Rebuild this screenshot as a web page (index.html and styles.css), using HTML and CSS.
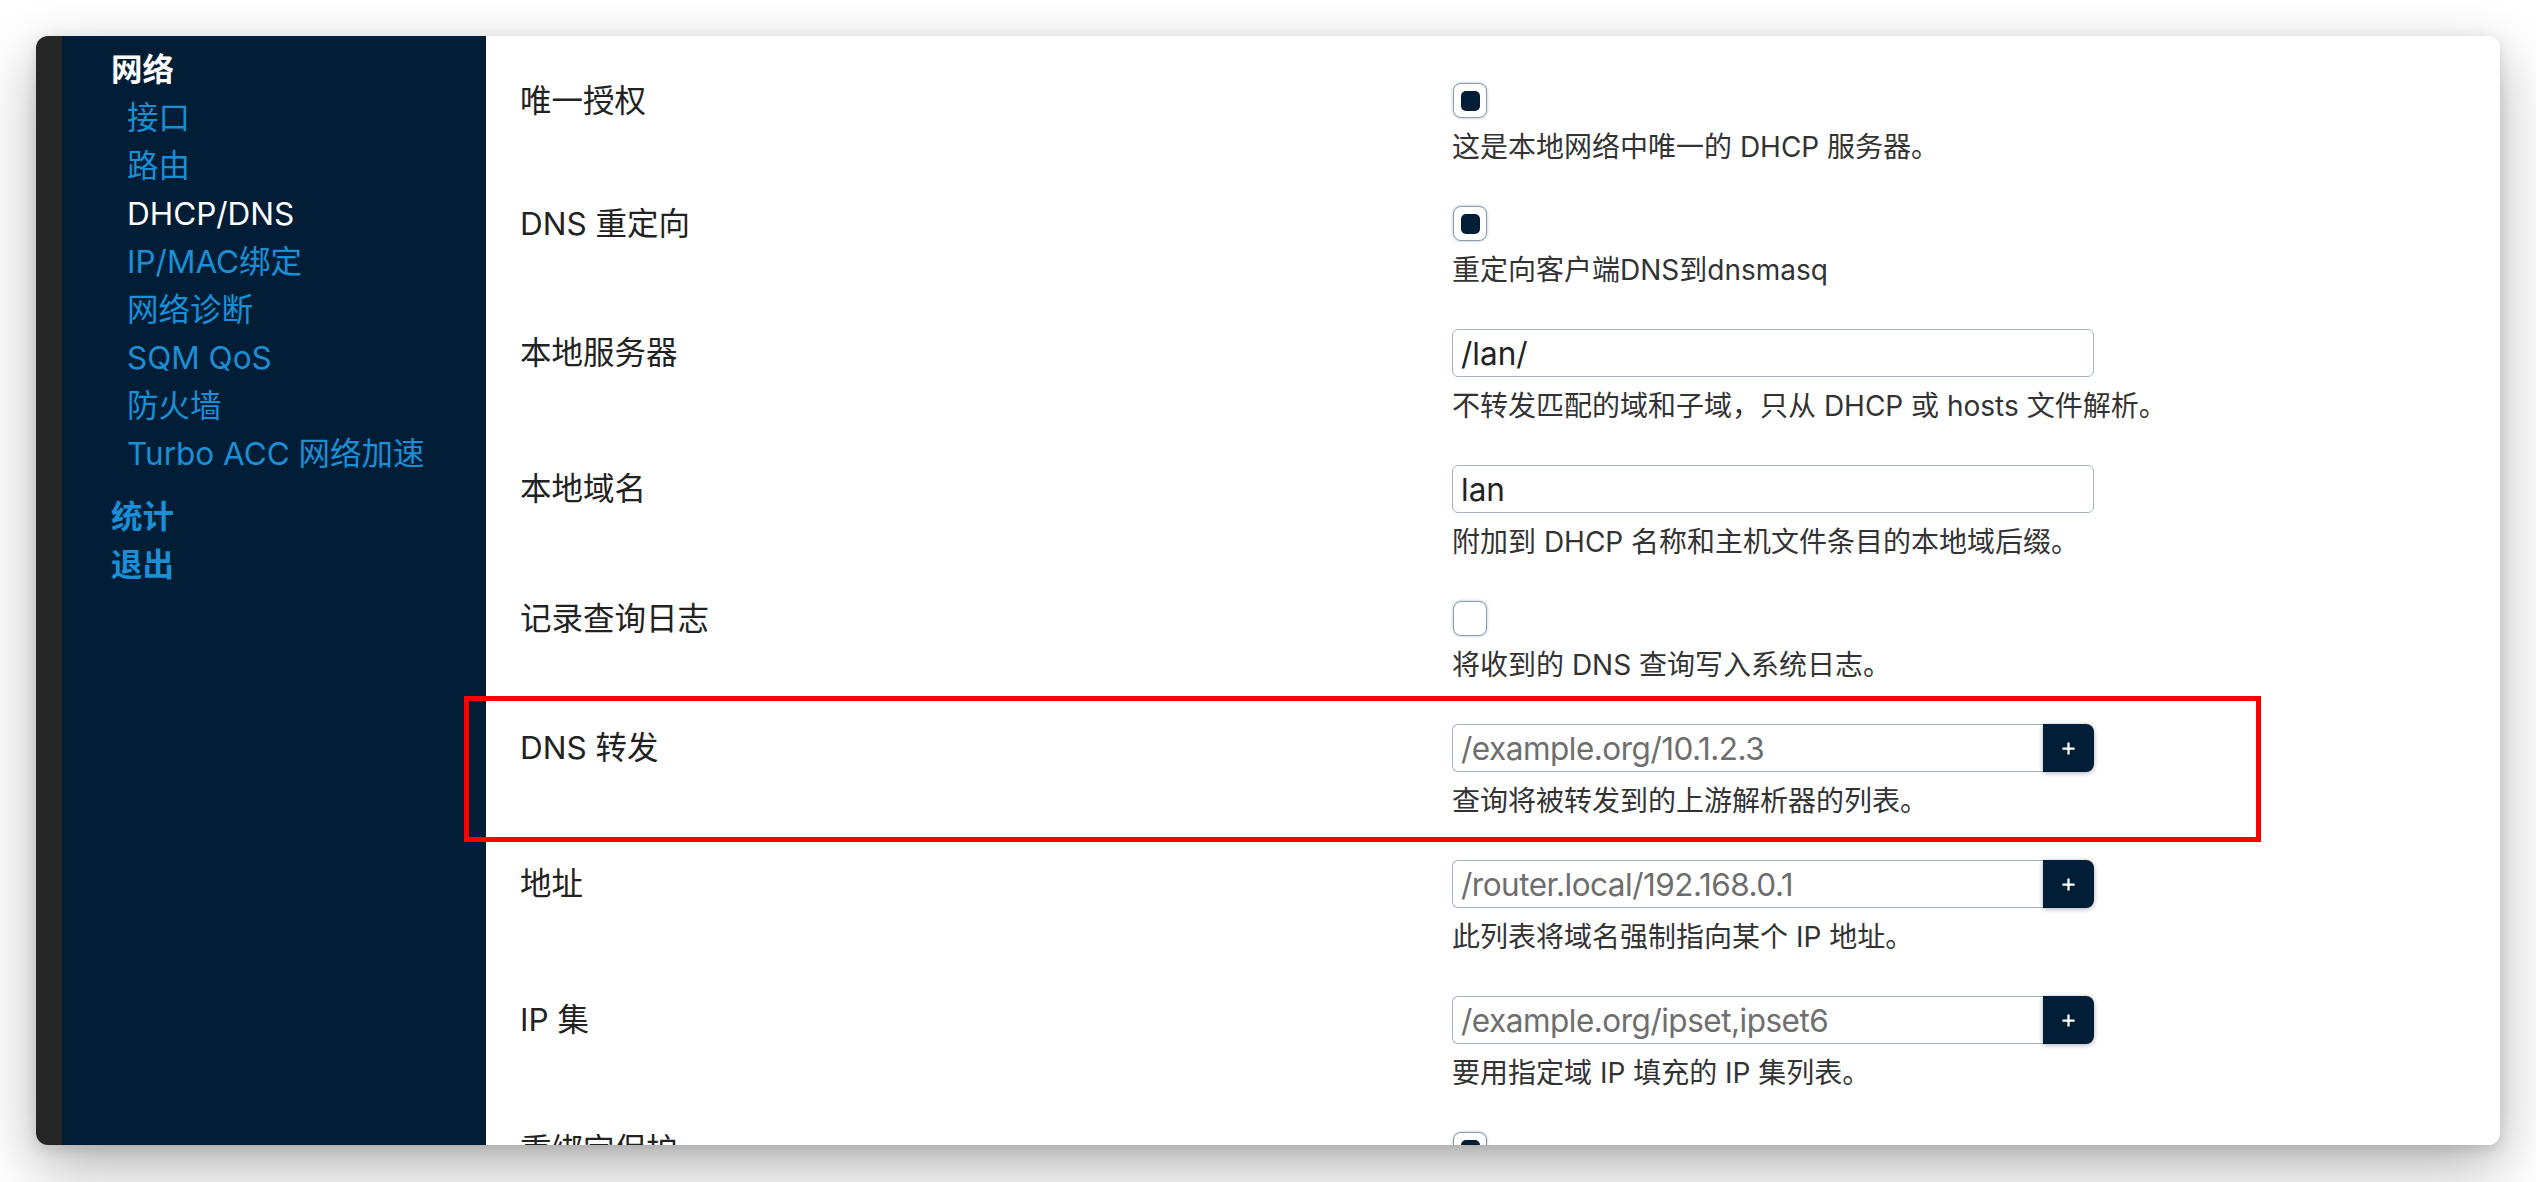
FILE: index.html
```html
<!DOCTYPE html>
<html lang="zh-CN">
<head>
<meta charset="utf-8">
<title>DHCP/DNS</title>
<link rel="stylesheet" href="styles.css">
</head>
<body>
<div class="window">
  <div class="strip"></div>
  <nav class="sidebar">
    <div class="nav-head">网络</div>
    <a class="nav-item">接口</a>
    <a class="nav-item">路由</a>
    <a class="nav-item active">DHCP/DNS</a>
    <a class="nav-item">IP/MAC绑定</a>
    <a class="nav-item">网络诊断</a>
    <a class="nav-item">SQM QoS</a>
    <a class="nav-item">防火墙</a>
    <a class="nav-item">Turbo ACC 网络加速</a>
    <a class="nav-head link gap">统计</a>
    <a class="nav-head link">退出</a>
  </nav>
  <main class="content">
    <div class="row">
      <div class="label">唯一授权</div>
      <div class="control"><span class="cb checked"></span></div>
      <div class="desc">这是本地网络中唯一的 DHCP 服务器。</div>
    </div>
    <div class="row">
      <div class="label">DNS 重定向</div>
      <div class="control"><span class="cb checked"></span></div>
      <div class="desc">重定向客户端DNS到dnsmasq</div>
    </div>
    <div class="row">
      <div class="label">本地服务器</div>
      <div class="control"><input class="text" type="text" value="/lan/"></div>
      <div class="desc">不转发匹配的域和子域，只从 DHCP 或 hosts 文件解析。</div>
    </div>
    <div class="row">
      <div class="label">本地域名</div>
      <div class="control"><input class="text" type="text" value="lan"></div>
      <div class="desc">附加到 DHCP 名称和主机文件条目的本地域后缀。</div>
    </div>
    <div class="row">
      <div class="label">记录查询日志</div>
      <div class="control"><span class="cb"></span></div>
      <div class="desc">将收到的 DNS 查询写入系统日志。</div>
    </div>
    <div class="row">
      <div class="label">DNS 转发</div>
      <div class="control dyn"><input class="text" type="text" placeholder="/example.org/10.1.2.3"><button class="add"><svg viewBox="0 0 16 16" width="15" height="15"><path d="M8 1.5v13M1.5 8h13" stroke="#fff" stroke-width="2.4" fill="none"/></svg></button></div>
      <div class="desc">查询将被转发到的上游解析器的列表。</div>
    </div>
    <div class="row">
      <div class="label">地址</div>
      <div class="control dyn"><input class="text" type="text" placeholder="/router.local/192.168.0.1"><button class="add"><svg viewBox="0 0 16 16" width="15" height="15"><path d="M8 1.5v13M1.5 8h13" stroke="#fff" stroke-width="2.4" fill="none"/></svg></button></div>
      <div class="desc">此列表将域名强制指向某个 IP 地址。</div>
    </div>
    <div class="row">
      <div class="label">IP 集</div>
      <div class="control dyn"><input class="text" type="text" placeholder="/example.org/ipset,ipset6"><button class="add"><svg viewBox="0 0 16 16" width="15" height="15"><path d="M8 1.5v13M1.5 8h13" stroke="#fff" stroke-width="2.4" fill="none"/></svg></button></div>
      <div class="desc">要用指定域 IP 填充的 IP 集列表。</div>
    </div>
    <div class="row">
      <div class="label">重绑定保护</div>
      <div class="control"><span class="cb checked"></span></div>
      <div class="desc">丢弃 RFC1918 上行响应数据。</div>
    </div>
  </main>
  <div class="highlight"></div>
</div>
</body>
</html>
```
FILE: styles.css
```css
html, body {
  margin: 0;
  padding: 0;
  background: #ffffff;
  overflow: hidden;
}
body {
  width: 2536px;
  height: 1182px;
  font-family: "Inter", "Noto Sans CJK SC", sans-serif;
}
.window {
  position: relative;
  margin: 36px 0 0 36px;
  width: 2464px;
  height: 1109px;
  border-radius: 12px;
  overflow: hidden;
  display: flex;
  box-shadow: 0 22px 60px rgba(0, 0, 0, 0.30), 0 4px 14px rgba(0, 0, 0, 0.12);
}
.strip {
  width: 26px;
  flex: none;
  background: #262626;
}
.sidebar {
  width: 424px;
  flex: none;
  background: #021e37;
  padding: 10px 0 0 49px;
  box-sizing: border-box;
  display: flex;
  flex-direction: column;
  align-items: flex-start;
}
.nav-head {
  font-size: 31.5px;
  line-height: 48px;
  font-weight: 700;
  color: #ffffff;
}
.nav-head.link {
  color: #1b8fd6;
}
.nav-head.gap {
  margin-top: 15px;
}
.nav-item {
  font-size: 31.5px;
  line-height: 48px;
  color: #1b8fd6;
  padding-left: 16px;
  white-space: nowrap;
}
.nav-item.active {
  color: #ffffff;
}
.content {
  flex: 1;
  background: #ffffff;
  padding: 47px 0 0 34px;
  overflow: hidden;
}
.row {
  display: grid;
  grid-template-columns: 932px 642px;
  row-gap: 11px;
  padding-bottom: 41px;
}
.label {
  grid-column: 1;
  grid-row: 1;
  align-self: center;
  font-size: 31.5px;
  line-height: 34px;
  color: #222222;
  white-space: nowrap;
}
.control {
  grid-column: 2;
  grid-row: 1;
  display: flex;
  align-items: center;
}
.desc {
  grid-column: 2;
  grid-row: 2;
  font-size: 28px;
  line-height: 36px;
  color: #333333;
  white-space: nowrap;
}
.cb {
  width: 34px;
  height: 35px;
  box-sizing: border-box;
  border: 1.5px solid #8b9db1;
  border-radius: 8px;
  background: #ffffff;
  box-shadow: 0 0 3px rgba(70, 95, 125, 0.45);
  display: flex;
  align-items: center;
  justify-content: center;
  margin-left: 1px;
}
.cb.checked::after {
  content: "";
  width: 19px;
  height: 20px;
  border-radius: 5px;
  background: #021e37;
}
.text {
  width: 642px;
  height: 48px;
  box-sizing: border-box;
  border: 1.5px solid #a6b4c3;
  border-radius: 6px;
  padding: 0 8px;
  font-family: "Inter", "Noto Sans CJK SC", sans-serif;
  font-size: 31.5px;
  color: #222222;
  background: #ffffff;
  outline: none;
  margin: 0;
}
.text::placeholder {
  color: #6e6e6e;
  letter-spacing: -0.5px;
}
.dyn .text {
  width: 591px;
  border-radius: 6px 0 0 6px;
  border-right: none;
}
.add {
  width: 51px;
  height: 48px;
  margin: 0;
  padding: 0;
  border: none;
  border-radius: 0 8px 8px 0;
  background: #021e37;
  box-shadow: 0 1px 5px rgba(0, 20, 45, 0.35);
  display: flex;
  align-items: center;
  justify-content: center;
}
.highlight {
  position: absolute;
  left: 428px;
  top: 660px;
  width: 1797px;
  height: 146px;
  box-sizing: border-box;
  border: 5px solid #ff0000;
  pointer-events: none;
}
```
